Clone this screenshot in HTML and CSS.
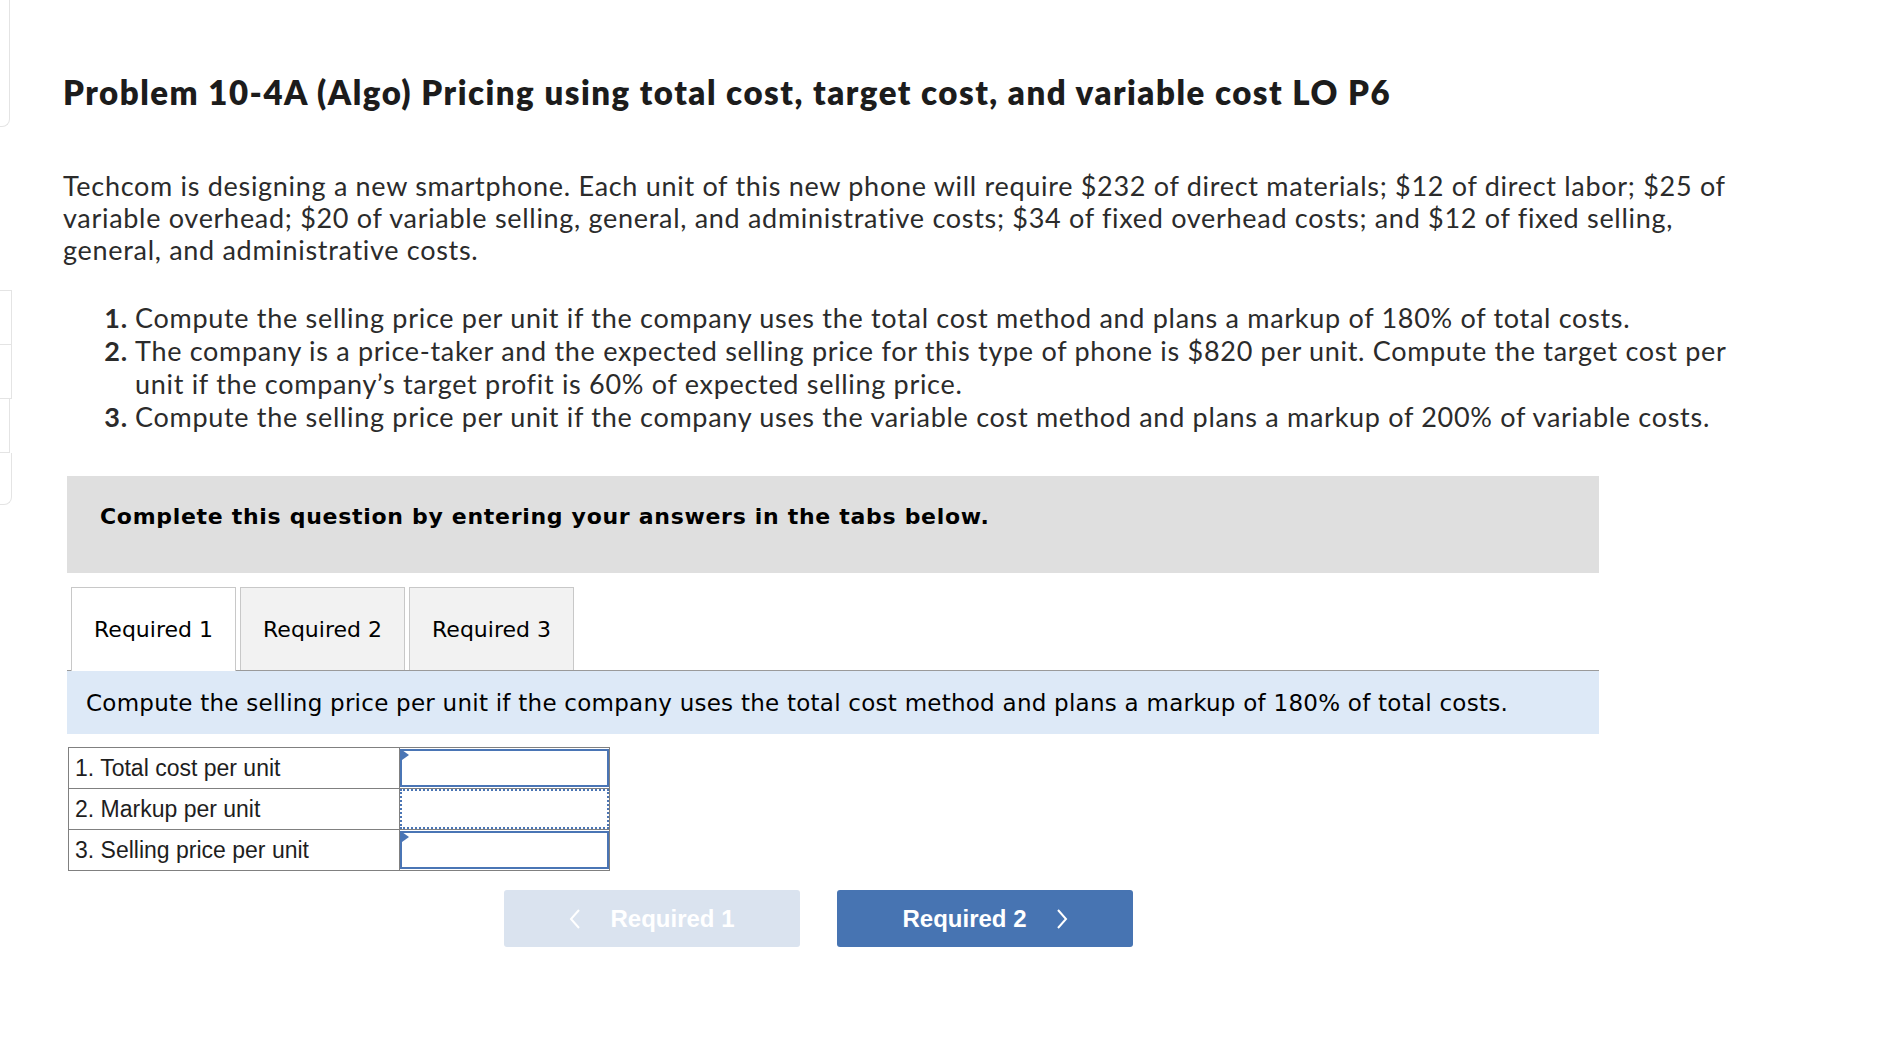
FILE: index.html
```html
<!DOCTYPE html>
<html lang="en">
<head>
<meta charset="utf-8">
<title>Problem 10-4A (Algo)</title>
<link rel="stylesheet" href="styles.css">
</head>
<body>
<aside class="rail" aria-hidden="true">
  <div class="rail-top"></div>
  <div class="rail-group">
    <div class="rail-item"></div>
    <div class="rail-item"></div>
    <div class="rail-item narrow"></div>
    <div class="rail-item last"></div>
  </div>
</aside>
<main class="page">
  <h1 class="title">Problem 10-4A (Algo) Pricing using total cost, target cost, and variable cost LO P6</h1>
  <p class="intro">Techcom is designing a new smartphone. Each unit of this new phone will require $232 of direct materials; $12 of direct labor; $25 of variable overhead; $20 of variable selling, general, and administrative costs; $34 of fixed overhead costs; and $12 of fixed selling, general, and administrative costs.</p>
  <ol class="reqs">
    <li>Compute the selling price per unit if the company uses the total cost method and plans a markup of 180% of total costs.</li>
    <li>The company is a price-taker and the expected selling price for this type of phone is $820 per unit. Compute the target cost per unit if the company’s target profit is 60% of expected selling price.</li>
    <li>Compute the selling price per unit if the company uses the variable cost method and plans a markup of 200% of variable costs.</li>
  </ol>
  <section class="question">
    <div class="banner"><strong>Complete this question by entering your answers in the tabs below.</strong></div>
    <div class="tabs">
      <div class="tab active">Required 1</div>
      <div class="tab">Required 2</div>
      <div class="tab">Required 3</div>
    </div>
    <div class="prompt">Compute the selling price per unit if the company uses the total cost method and plans a markup of 180% of total costs.</div>
    <table class="answers">
      <tr>
        <td class="label">1. Total cost per unit</td>
        <td class="field flagged"><input type="text" class="cell-input"></td>
      </tr>
      <tr>
        <td class="label">2. Markup per unit</td>
        <td class="field"><input type="text" class="cell-input dotted"></td>
      </tr>
      <tr>
        <td class="label">3. Selling price per unit</td>
        <td class="field flagged"><input type="text" class="cell-input"></td>
      </tr>
    </table>
    <div class="nav">
      <button class="nav-btn prev" type="button">
        <svg class="chev" width="12" height="20" viewBox="0 0 12 20"><polyline points="10,1 2,10 10,19"/></svg>
        <span>Required 1</span>
      </button>
      <button class="nav-btn next" type="button">
        <span>Required 2</span>
        <svg class="chev" width="12" height="20" viewBox="0 0 12 20"><polyline points="2,1 10,10 2,19"/></svg>
      </button>
    </div>
  </section>
</main>
</body>
</html>
```

FILE: styles.css
```css
html, body {
  margin: 0;
  background: #fff;
}

.rail {
  position: absolute;
  left: 0;
  top: 0;
  width: 12px;
}

.rail-top {
  width: 9px;
  height: 126px;
  border-right: 1px solid #e4e4e4;
  border-bottom: 1px solid #e4e4e4;
  border-bottom-right-radius: 8px;
}

.rail-group {
  margin-top: 163px;
  border-top: 1px solid #e4e4e4;
  width: 12px;
}

.rail-item {
  width: 11px;
  height: 53px;
  border-right: 1px solid #e4e4e4;
  border-bottom: 1px solid #e4e4e4;
}

.rail-item.narrow {
  width: 9px;
}

.rail-item.last {
  height: 51px;
  border-bottom-right-radius: 8px;
}

.page {
  padding: 75px 0 60px 63px;
  width: 1702px;
  font-family: "Lato", "Liberation Sans", sans-serif;
  color: #2b2b2b;
}

.title {
  margin: 0;
  font-size: 33px;
  line-height: 35px;
  font-weight: 800;
  letter-spacing: 1.5px;
  color: #1c1c1c;
}

.intro {
  margin: 60px 0 0;
  font-size: 27px;
  line-height: 32px;
  letter-spacing: 0.7px;
}

.reqs {
  margin: 35px 0 0;
  padding-left: 72px;
  font-size: 27px;
  line-height: 33px;
  letter-spacing: 0.7px;
}

.reqs li::marker {
  font-weight: 700;
}

.question {
  margin: 43px 0 0 4px;
  width: 1532px;
}

.banner {
  background: #dfdfdf;
  height: 97px;
  box-sizing: border-box;
  padding: 28px 0 0 33px;
  font-family: "DejaVu Sans", Verdana, sans-serif;
  font-size: 22px;
  line-height: 26px;
  letter-spacing: 0.7px;
  color: #000;
}

.tabs {
  display: flex;
  align-items: flex-start;
  gap: 4px;
  padding-left: 4px;
  margin-top: 14px;
  border-bottom: 1px solid #9a9a9a;
}

.tab {
  width: 165px;
  height: 83px;
  box-sizing: border-box;
  border: 1px solid #c8c8c8;
  border-bottom: none;
  background: #f2f2f2;
  display: flex;
  align-items: center;
  justify-content: center;
  font-family: "DejaVu Sans", Verdana, sans-serif;
  font-size: 22px;
  color: #000;
}

.tab.active {
  background: #fff;
  height: 84px;
  margin-bottom: -1px;
}

.prompt {
  background: #dde9f7;
  height: 63px;
  box-sizing: border-box;
  padding-left: 19px;
  display: flex;
  align-items: center;
  font-family: "DejaVu Sans", Verdana, sans-serif;
  font-size: 23px;
  letter-spacing: 0.25px;
  color: #000;
}

.answers {
  margin: 13px 0 0 1px;
  border-collapse: collapse;
  font-family: "Liberation Sans", Arial, sans-serif;
  font-size: 23px;
  color: #1e1e1e;
}

.answers td {
  border: 1px solid #808080;
  height: 40px;
  padding: 0;
}

.answers .label {
  width: 324px;
  padding-left: 6px;
}

.answers .field {
  width: 209px;
  position: relative;
}

.cell-input {
  display: block;
  width: 100%;
  height: 38px;
  box-sizing: border-box;
  margin: 0;
  border: 2px solid #4a75b5;
  background: #fff;
  outline: none;
}

.cell-input.dotted {
  border-style: dotted;
  height: 40px;
}

.field.flagged::before {
  content: "";
  position: absolute;
  z-index: 1;
  left: 2px;
  top: 2px;
  width: 0;
  height: 0;
  border-top: 5px solid transparent;
  border-bottom: 5px solid transparent;
  border-left: 7px solid #4a75b5;
}

.nav {
  display: flex;
  gap: 37px;
  margin: 19px 0 0 437px;
}

.nav-btn {
  width: 296px;
  height: 57px;
  border: none;
  border-radius: 3px;
  display: flex;
  align-items: center;
  justify-content: center;
  gap: 29px;
  padding: 0;
  font-family: "Liberation Sans", Arial, sans-serif;
  font-size: 24px;
  font-weight: 700;
  color: #fff;
}

.nav-btn.prev {
  background: #dae3ef;
}

.nav-btn.next {
  background: #4774b2;
}

.chev polyline {
  fill: none;
  stroke: #fff;
  stroke-width: 2;
}
```
